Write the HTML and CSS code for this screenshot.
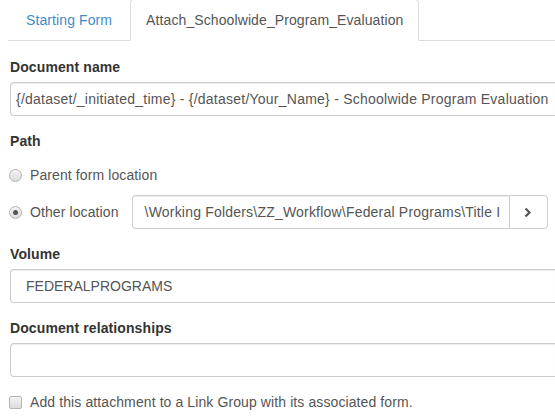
FILE: index.html
```html
<!DOCTYPE html>
<html>
<head>
<meta charset="utf-8">
<link rel="stylesheet" href="styles.css">
</head>
<body>
<ul class="tabs">
  <li class="tab-item"><span class="tab">Starting Form</span></li>
  <li class="tab-item active"><span class="tab">Attach_Schoolwide_Program_Evaluation</span></li>
</ul>
<div class="content">
  <div class="group">
    <div class="label">Document name</div>
    <div class="field wide name-field">{/dataset/_initiated_time} - {/dataset/Your_Name} - Schoolwide Program Evaluation</div>
  </div>
  <div class="group">
    <div class="label">Path</div>
    <div class="choices">
      <div class="choice first"><span class="radio"></span><span class="choice-text">Parent form location</span></div>
      <div class="choice other"><span class="radio checked"></span><span class="choice-text">Other location</span>
        <div class="input-group">
          <div class="field path-field">\Working Folders\ZZ_Workflow\Federal Programs\Title I</div>
          <div class="go-btn"><svg width="8" height="11" viewBox="0 0 8 11"><polyline points="1.5,1.5 5.5,5.5 1.5,9.5" fill="none" stroke="#555" stroke-width="2.2"/></svg></div>
        </div>
      </div>
    </div>
  </div>
  <div class="group">
    <div class="label">Volume</div>
    <div class="field wide volume-field">FEDERALPROGRAMS</div>
  </div>
  <div class="group">
    <div class="label">Document relationships</div>
    <div class="field wide"></div>
  </div>
  <div class="choice"><span class="checkbox"></span><span class="choice-text">Add this attachment to a Link Group with its associated form.</span></div>
</div>
</body>
</html>
```

FILE: styles.css
```css
html, body {
  margin: 0;
  padding: 0;
  overflow: hidden;
}
body {
  width: 555px;
  height: 419px;
  background: #fff;
  font-family: "Liberation Sans", Arial, sans-serif;
  font-size: 14px;
  line-height: 20px;
  letter-spacing: 0.1px;
  color: #333;
}
.tabs {
  display: flex;
  list-style: none;
  margin: -1px 0 0 8px;
  padding: 0 0 0 2px;
  border-bottom: 1px solid #ddd;
}
.tab-item {
  margin-right: 2px;
  margin-bottom: -1px;
}
.tab {
  display: block;
  padding: 10px 15px;
  border: 1px solid transparent;
  border-radius: 4px 4px 0 0;
  color: #428bca;
  white-space: nowrap;
}
.active .tab {
  color: #555;
  background: #fff;
  border-color: #ddd #ddd transparent;
}
.content {
  margin-left: 10px;
  padding-top: 16px;
}
.group {
  margin-bottom: 15px;
}
.label {
  font-weight: bold;
  margin-bottom: 5px;
  color: #333;
}
.field {
  box-sizing: border-box;
  height: 34px;
  padding: 6px 12px;
  border: 1px solid #ccc;
  border-radius: 4px;
  color: #555;
  background: #fff;
  white-space: nowrap;
  overflow: hidden;
  box-shadow: inset 0 1px 1px rgba(0,0,0,0.075);
}
.wide {
  border-right: none;
  border-radius: 4px 0 0 4px;
}
.name-field {
  padding-left: 5px;
  padding-right: 0;
  letter-spacing: 0.24px;
}
.volume-field {
  padding-left: 15px;
  letter-spacing: 0;
}
.choices {
  display: flex;
  flex-direction: column;
  padding-top: 9px;
  gap: 10px;
}
.choice {
  display: flex;
  align-items: center;
  color: #555;
}
.choice.first {
  height: 20px;
}
.radio, .checkbox {
  box-sizing: border-box;
  width: 13px;
  height: 13px;
  margin-left: -1px;
  margin-right: 8px;
  border: 1px solid #b4b4b4;
  background: linear-gradient(#f4f4f4, #dcdcdc);
  flex: none;
}
.radio {
  border-radius: 50%;
  display: flex;
  align-items: center;
  justify-content: center;
}
.radio.checked::after {
  content: "";
  width: 5px;
  height: 5px;
  border-radius: 50%;
  background: #555;
}
.checkbox {
  border-radius: 2px;
}
.input-group {
  display: flex;
  width: 416px;
  margin-left: 13px;
}
.path-field {
  flex: 1;
  border-right: none;
  border-radius: 4px 0 0 4px;
  letter-spacing: 0.2px;
}
.go-btn {
  box-sizing: border-box;
  width: 39px;
  height: 34px;
  border: 1px solid #ccc;
  border-radius: 0 4px 4px 0;
  background: #fff;
  display: flex;
  align-items: center;
  justify-content: center;
}
```
